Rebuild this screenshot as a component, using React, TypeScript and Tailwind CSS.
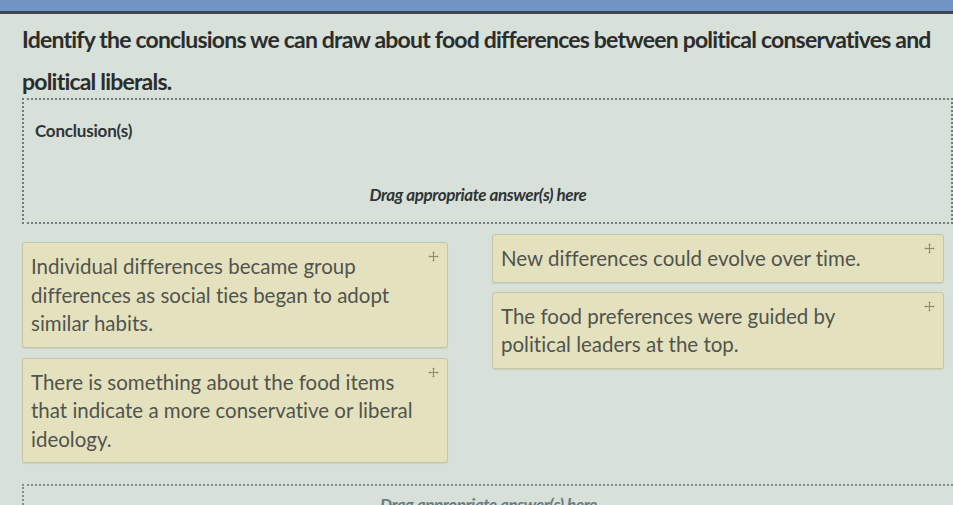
const leftAnswers = [
  "Individual differences became group differences as social ties began to adopt similar habits.",
  "There is something about the food items that indicate a more conservative or liberal ideology.",
];

const rightAnswers = [
  "New differences could evolve over time.",
  "The food preferences were guided by political leaders at the top.",
];

const MoveIcon = () => (
  <svg width="11" height="11" viewBox="0 0 12 12" className="absolute right-[8px] top-[8px] text-[#8a8a7a]">
    <path d="M6 1v10M1 6h10" stroke="currentColor" strokeWidth="1.2" />
    <path d="M6 0.5l-1.6 1.8h3.2zM6 11.5l-1.6-1.8h3.2zM0.5 6l1.8-1.6v3.2zM11.5 6l-1.8-1.6v3.2z" fill="currentColor" />
  </svg>
);

const AnswerCard = ({ text, wide }: { text: string; wide?: boolean }) => (
  <div
    className={`relative rounded-[3px] border border-[#c9c7a3] bg-[#e4e2be] py-[9px] pl-[8px] text-[20.5px] leading-[28.5px] text-[#52534d] shadow-[0_1px_1px_rgba(0,0,0,0.08)] ${
      wide ? "pr-[44px]" : "pr-[30px]"
    }`}
  >
    {text}
    <MoveIcon />
  </div>
);

export default function App() {
  return (
    <div className="h-[505px] w-[953px] overflow-hidden bg-[#d7e0d9] font-['Lato',sans-serif] [font-variant-ligatures:none]">
      <div className="h-[14px] border-b-[3px] border-[#3d4650] bg-[#7094c4]" />
      <div className="pl-[22px] pt-[4px]">
        <h1 className="pr-[14px] text-[23px] font-bold leading-[42px] tracking-[-0.8px] text-[#2b2d2c]">
          Identify the conclusions we can draw about food differences between political conservatives and political liberals.
        </h1>
        <div className="-mt-[4px] flex h-[126px] flex-col border-2 border-dotted border-[#6f7c82] pl-[11px]">
          <div className="pt-[18px] text-[17px] font-bold tracking-[-0.2px] text-[#2f3435]">Conclusion(s)</div>
          <div className="mt-[38px] pr-[30px] text-center text-[17px] font-bold italic tracking-[-0.4px] text-[#2f3435]">
            Drag appropriate answer(s) here
          </div>
        </div>
        <div className="mt-[10px] grid grid-cols-[426px_452px] gap-x-[44px]">
          <div className="flex flex-col gap-[10px] pt-[8px]">
            {leftAnswers.map((a) => (
              <AnswerCard key={a} text={a} />
            ))}
          </div>
          <div className="flex flex-col gap-[9px]">
            {rightAnswers.map((a) => (
              <AnswerCard key={a} text={a} wide />
            ))}
          </div>
        </div>
        <div className="mt-[21px] h-[60px] border-l-2 border-t-2 border-dotted border-[#7f8f92] pt-[6px] text-center text-[17px] font-bold italic tracking-[-0.4px] text-[#6a7a80]">
          Drag appropriate answer(s) here
        </div>
      </div>
    </div>
  );
}
